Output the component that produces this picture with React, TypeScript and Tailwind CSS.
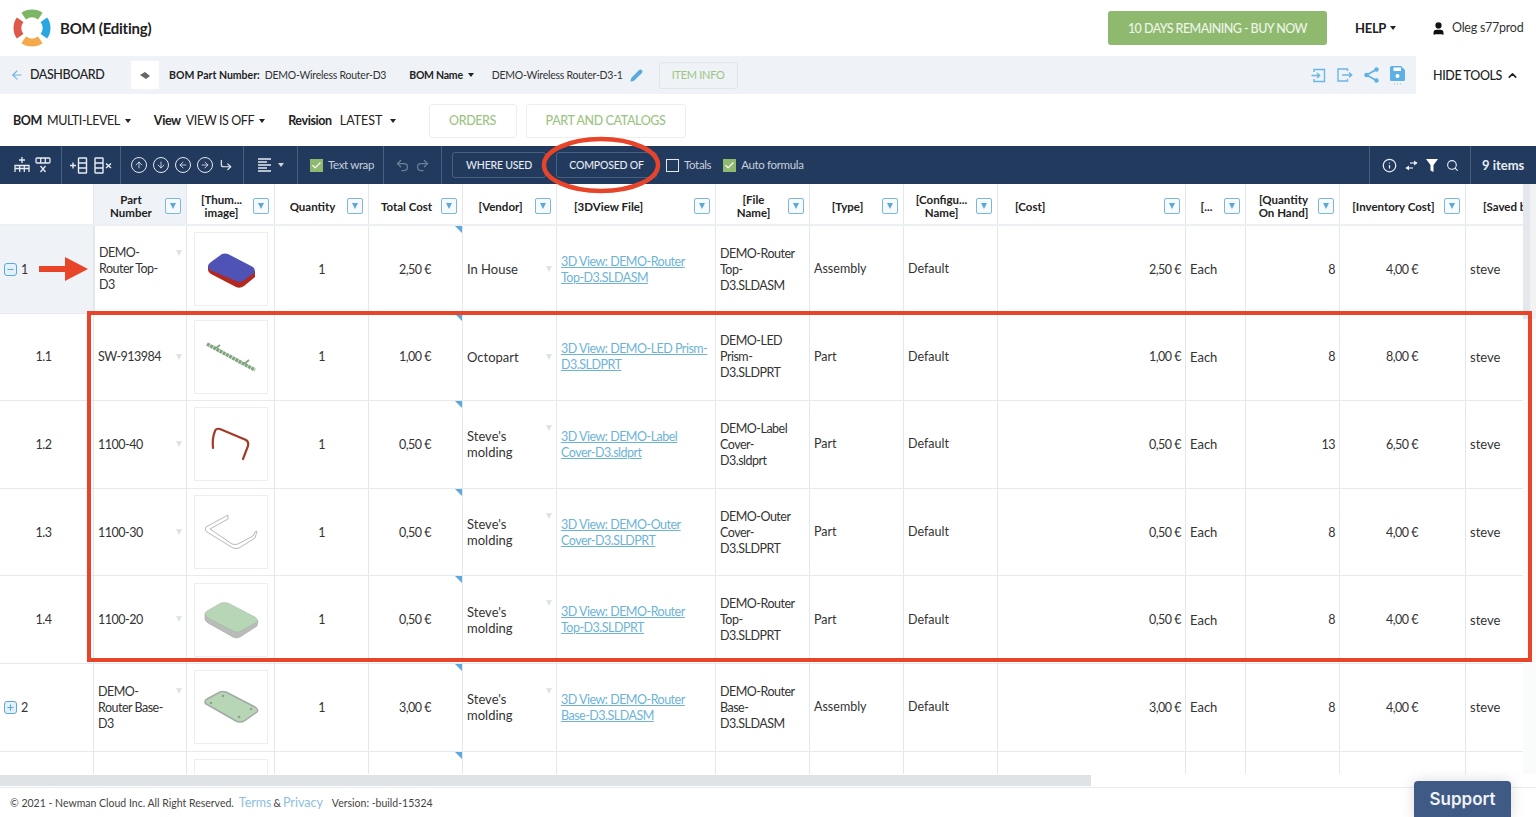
import React from "react";
import { ArrowLeft, Pencil, ChevronUp, User, Search, Info, ArrowUp, ArrowDown, ArrowRight, CornerDownRight, Undo2, Redo2, Check, Plus, Minus } from "lucide-react";

const COLS = "grid-cols-[94px_93px_88px_94px_94px_94px_159px_94px_94px_94px_188px_60px_94px_126px_70px]";
const NUM = "text-[12.5px] tracking-[-0.5px] pt-[1px]";
const CAPS = "text-[12.5px] tracking-[-0.4px]";
const SMALL = "text-[10.5px] tracking-[-0.25px]";

const Caret = () => <span className="inline-block w-0 h-0 border-x-[3.5px] border-x-transparent border-t-[4px] border-t-[#222] align-middle" />;
const WCaret = () => <span className="inline-block w-0 h-0 border-x-[3.5px] border-x-transparent border-t-[4px] border-t-[#cfd6e0]" />;

const Sep = () => <div className="w-px self-stretch bg-[#4a6080]" />;

const Circ = ({ children }: { children: React.ReactNode }) => (
  <span className="w-[16px] h-[16px] rounded-full border border-[#e4e8ee] flex items-center justify-center text-[#e4e8ee]">{children}</span>
);

const Chk = ({ on, label }: { on: boolean; label: string }) => (
  <div className="flex items-center gap-[5px]">
    <span className={on ? "w-[13px] h-[13px] bg-[#8fb96f] flex items-center justify-center" : "w-[13px] h-[13px] border border-[#e4e8ee]"}>
      {on && <Check size={11} strokeWidth={2.5} className="text-white" />}
    </span>
    <span className="text-[11.5px] tracking-[-0.35px] text-[#c6cfdb]">{label}</span>
  </div>
);

const FilterBtn = () => (
  <span className="w-[16px] h-[16px] shrink-0 rounded-[2px] border border-[#7db7dc] bg-[#f6fafd] flex items-center justify-center">
    <span className="w-0 h-0 border-x-[3.5px] border-x-transparent border-t-[6px] border-t-[#5aa9de]" />
  </span>
);

const Logo = () => (
  <svg width="38" height="38" viewBox="0 0 38 38" fill="none" strokeWidth="8">
    <path d="M10.7 7.1 A14.5 14.5 0 0 1 27.3 7.1" stroke="#7cb665" />
    <path d="M30.9 10.7 A14.5 14.5 0 0 1 30.9 27.3" stroke="#2ba7e0" />
    <path d="M27.3 30.9 A14.5 14.5 0 0 1 10.7 30.9" stroke="#f3a94c" />
    <path d="M7.1 27.3 A14.5 14.5 0 0 1 7.1 10.7" stroke="#dd5a4a" />
  </svg>
);

const AddRowIcon = () => (
  <svg width="16" height="16" viewBox="0 0 16 16" fill="none" stroke="#e8ecf2" strokeWidth="1.3">
    <path d="M8 0 V6 M5 3 H11" />
    <path d="M1 15 V8.5 H15 V15 M5.7 8.5 V15 M10.3 8.5 V15 M1 11.5 H15" />
  </svg>
);
const DelRowIcon = () => (
  <svg width="16" height="16" viewBox="0 0 16 16" fill="none" stroke="#e8ecf2" strokeWidth="1.3">
    <rect x="1" y="1" width="14" height="5" rx="1" />
    <path d="M5.7 1 V6 M10.3 1 V6" />
    <path d="M5.5 9 L10.5 15 M10.5 9 L5.5 15" />
  </svg>
);
const AddColIcon = () => (
  <svg width="18" height="17" viewBox="0 0 18 17" fill="none" stroke="#e8ecf2" strokeWidth="1.4">
    <path d="M0 8.5 H6 M3 5.5 V11.5" />
    <rect x="8.5" y="1" width="8" height="15" rx=".5" />
    <path d="M8.5 6 H16.5 M8.5 11 H16.5" />
  </svg>
);
const DelColIcon = () => (
  <svg width="18" height="17" viewBox="0 0 18 17" fill="none" stroke="#e8ecf2" strokeWidth="1.4">
    <rect x="1" y="1" width="8" height="15" rx=".5" />
    <path d="M1 6 H9 M1 11 H9" />
    <path d="M12 6.5 L17 11 M17 6.5 L12 11" />
  </svg>
);
const AlignIcon = () => (
  <svg width="14" height="14" viewBox="0 0 14 14" stroke="#e8ecf2" strokeWidth="1.5">
    <path d="M0 1 H13 M0 4 H9 M0 7 H13 M0 10 H9 M0 13 H13" />
  </svg>
);
const SwapIcon = () => (
  <svg width="13" height="11" viewBox="0 0 13 11" fill="#e8ecf2" stroke="#e8ecf2" strokeWidth="1.2">
    <path d="M5 3 H12" /><path d="M9 0.5 L12.5 3 L9 5.5Z" stroke="none" />
    <path d="M1 8 H8" /><path d="M4 5.5 L0.5 8 L4 10.5Z" stroke="none" />
  </svg>
);
const FunnelIcon = () => (
  <svg width="12" height="13" viewBox="0 0 12 13" fill="#fff"><path d="M0 0 H12 L7.5 6 V13 L4.5 11.5 V6Z" /></svg>
);
const ImportIcon = () => (
  <svg width="15" height="15" viewBox="0 0 15 15" fill="none" stroke="#6db5e3" strokeWidth="1.4">
    <path d="M3 4 V1.5 H13.5 V13.5 H3 V11" /><path d="M0.5 7.5 H8.5 M6 5 L8.7 7.5 L6 10" />
  </svg>
);
const ExportIcon = () => (
  <svg width="16" height="14" viewBox="0 0 16 14" fill="none" stroke="#6db5e3" strokeWidth="1.4">
    <path d="M10.5 3 V1 H1 V13 H10.5 V11" /><path d="M5 7 H14.5 M12 4.5 L14.7 7 L12 9.5" />
  </svg>
);
const ShareIcon = () => (
  <svg width="15" height="16" viewBox="0 0 15 16" fill="#5fb0e4" stroke="#5fb0e4" strokeWidth="1.7">
    <path d="M12.5 2.5 L2.5 8 L12.5 13.5" fill="none" />
    <circle cx="12.5" cy="2.5" r="1.4" /><circle cx="2.5" cy="8" r="1.4" /><circle cx="12.5" cy="13.5" r="1.4" />
  </svg>
);
const SaveIcon = () => (
  <svg width="15" height="19" viewBox="0 0 15 19">
    <path d="M1.5 0 H11 L15 4 V13.5 Q15 15 13.5 15 H1.5 Q0 15 0 13.5 V1.5 Q0 0 1.5 0Z" fill="#5fb0e4" />
    <rect x="3.5" y="1.5" width="7.5" height="3.5" fill="#fff" />
    <circle cx="7.5" cy="10" r="2" fill="#fff" />
    <path d="M4 18 H5 M7 18 H8 M10 18 H11" stroke="#9fb8c9" />
  </svg>
);

const Thumb = ({ children }: { children: React.ReactNode }) => (
  <svg width="72" height="72" viewBox="0 0 72 72">{children}</svg>
);

const thumbs: Record<string, React.ReactNode> = {
  top: (
    <Thumb>
      <path d="M13 33 L13 37 Q13 39 16 41 L41 54 Q45 56 49 53 L60 44 L60 38 L36 34Z" fill="#b4291f" />
      <path d="M13 33 Q13 31 16 29 L27 21 Q30 20 33 21 L58 34 Q61 37 59 40 L48 48 Q45 50 41 48 L15 37 Q13 35 13 33Z" fill="#4f53b5" />
    </Thumb>
  ),
  led: (
    <Thumb>
      <path d="M12 23 L60 49" stroke="#7ea67e" strokeWidth="3.6" fill="none" strokeDasharray="3 .6" />
      <path d="M25 24 L21 27 M54 39 L49 43" stroke="#7ea67e" strokeWidth="1.8" fill="none" />
    </Thumb>
  ),
  label: (
    <Thumb>
      <path d="M18 40 Q17 30 20 23 Q21 20 25 21 L51 32 Q54 34 53 38 L48 51" stroke="#a63a28" strokeWidth="2.2" fill="none" strokeLinecap="round" />
    </Thumb>
  ),
  outer: (
    <Thumb>
      <path d="M33 19 L11 31 Q9 34 12 36 L38 52 Q41 53 44 52 L60 42 L62 35 L60 36 L58 40 L43 48 Q40 49 37 48 L15 33 L33 23Z" stroke="#b9b9b9" strokeWidth="1" fill="#fff" strokeLinejoin="round" />
    </Thumb>
  ),
  green: (
    <Thumb>
      <path d="M10 30 L10 35 Q10 37 13 39 L38 53 Q41 55 45 53 L62 42 L63 37 L35 30Z" fill="#b9bcb9" stroke="#9a9d9a" strokeWidth=".5" />
      <path d="M10 30 Q10 28 12 27 L26 19 Q29 18 33 19 L60 33 Q64 36 62 38 L46 47 Q42 49 38 47 L13 34 Q10 32 10 30Z" fill="#b7d6b6" stroke="#a3b3a3" strokeWidth=".5" />
    </Thumb>
  ),
  base: (
    <Thumb>
      <path d="M10 31 Q10 29 12 28 L25 21 Q28 20 31 21 L60 36 Q64 39 62 41 L49 50 Q45 52 41 50 L13 34 Q10 33 10 31Z" fill="#b7d6b6" stroke="#a4aaa4" strokeWidth="1.5" />
      <circle cx="28" cy="25" r="1.3" fill="#8fa28f" /><circle cx="56" cy="38" r="1.3" fill="#8fa28f" /><circle cx="16" cy="32" r="1.3" fill="#8fa28f" /><circle cx="44" cy="46" r="1.3" fill="#8fa28f" />
    </Thumb>
  ),
};

type Row = { no: string; level: 0 | 1; open?: boolean; part: string; thumb: string; total: string; vendor: string; link: string; file: string; type: string; cost: string; qty: string; inv: string; sel?: boolean };

const rows: Row[] = [
  { no: "1", level: 0, open: true, sel: true, part: "DEMO-\nRouter Top-\nD3", thumb: "top", total: "2,50 €", vendor: "In House", link: "3D View: DEMO-Router\nTop-D3.SLDASM", file: "DEMO-Router\nTop-\nD3.SLDASM", type: "Assembly", cost: "2,50 €", qty: "8", inv: "4,00 €" },
  { no: "1.1", level: 1, part: "SW-913984", thumb: "led", total: "1,00 €", vendor: "Octopart", link: "3D View: DEMO-LED Prism-\nD3.SLDPRT", file: "DEMO-LED\nPrism-\nD3.SLDPRT", type: "Part", cost: "1,00 €", qty: "8", inv: "8,00 €" },
  { no: "1.2", level: 1, part: "1100-40", thumb: "label", total: "0,50 €", vendor: "Steve's molding", link: "3D View: DEMO-Label\nCover-D3.sldprt", file: "DEMO-Label\nCover-\nD3.sldprt", type: "Part", cost: "0,50 €", qty: "13", inv: "6,50 €" },
  { no: "1.3", level: 1, part: "1100-30", thumb: "outer", total: "0,50 €", vendor: "Steve's molding", link: "3D View: DEMO-Outer\nCover-D3.SLDPRT", file: "DEMO-Outer\nCover-\nD3.SLDPRT", type: "Part", cost: "0,50 €", qty: "8", inv: "4,00 €" },
  { no: "1.4", level: 1, part: "1100-20", thumb: "green", total: "0,50 €", vendor: "Steve's molding", link: "3D View: DEMO-Router\nTop-D3.SLDPRT", file: "DEMO-Router\nTop-\nD3.SLDPRT", type: "Part", cost: "0,50 €", qty: "8", inv: "4,00 €" },
  { no: "2", level: 0, open: false, part: "DEMO-\nRouter Base-\nD3", thumb: "base", total: "3,00 €", vendor: "Steve's molding", link: "3D View: DEMO-Router\nBase-D3.SLDASM", file: "DEMO-Router\nBase-\nD3.SLDASM", type: "Assembly", cost: "3,00 €", qty: "8", inv: "4,00 €" },
];

const headers: [string, boolean][] = [
  ["", false], ["Part\nNumber", true], ["[Thum...\nimage]", true], ["Quantity", true], ["Total Cost", true], ["[Vendor]", true], ["[3DView File]", true], ["[File\nName]", true], ["[Type]", true], ["[Configu...\nName]", true], ["[Cost]", true], ["[...", true], ["[Quantity\nOn Hand]", true], ["[Inventory Cost]", true], ["[Saved b", false],
];

const cell = "border-r border-[#e3e8ee] h-full flex items-center px-[4px] min-w-0 relative";
const Corner = () => <span className="absolute top-0 right-0 w-0 h-0 border-l-[7px] border-l-transparent border-t-[7px] border-t-[#5aa9de]" />;
const Fade = ({ top }: { top?: boolean }) => <span className={top ? "absolute right-[4px] top-[24px] w-0 h-0 border-x-[3.5px] border-x-transparent border-t-[6px] border-t-[#dfe3e8]" : "absolute right-[4px] top-[40px] w-0 h-0 border-x-[3.5px] border-x-transparent border-t-[6px] border-t-[#dfe3e8]"} />;

function DataRow({ r }: { r: Row }) {
  return (
    <div className={`grid ${COLS} h-[87.6px] border-b border-[#e6eaef] w-[1536px]`}>
      <div className={`${cell} ${NUM} ${r.sel ? "bg-[#eff3f7]" : ""} ${r.level === 1 ? "justify-center pr-[10px]" : "gap-[4px]"}`}>
        {r.level === 0 && (
          <span className="w-[13px] h-[13px] rounded-[3px] border border-[#5aa9de] bg-[#e4f1fa] flex items-center justify-center">
            {r.open ? <Minus size={9} strokeWidth={3} className="text-[#5aa9de]" /> : <Plus size={9} strokeWidth={3} className="text-[#5aa9de]" />}
          </span>
        )}
        <span>{r.no}</span>
      </div>
      <div className={`${cell} ${NUM} ${r.sel ? "border-x border-b border-[#6fb0d8]" : ""}`}><span className="whitespace-pre-line">{r.part}</span><Fade top={r.part.length > 10} /></div>
      <div className={`${cell} justify-center`}>
        <div className="w-[74px] h-[74px] border border-[#eceef1] flex items-center justify-center">{thumbs[r.thumb]}</div>
      </div>
      <div className={`${cell} ${NUM} justify-center`}>1</div>
      <div className={`${cell} ${NUM} justify-end pr-[31px]`}><Corner />{r.total}</div>
      <div className={cell}><span className="pr-[14px]">{r.vendor}</span><Fade top={r.vendor.length > 9} /></div>
      <div className={`${cell} ${NUM}`}><span className="whitespace-pre-line text-[#6db3d6] underline underline-offset-1">{r.link}</span></div>
      <div className={`${cell} ${NUM}`}><span className="whitespace-pre-line">{r.file}</span></div>
      <div className={`${cell} text-[12.5px]`}>{r.type}</div>
      <div className={`${cell} text-[12.5px]`}>Default</div>
      <div className={`${cell} ${NUM} justify-end`}>{r.cost}</div>
      <div className={cell}>Each</div>
      <div className={`${cell} ${NUM} justify-end`}>{r.qty}</div>
      <div className={`${cell} ${NUM} justify-end pr-[47px]`}>{r.inv}</div>
      <div className="h-full flex items-center px-[4px]">steve</div>
    </div>
  );
}

export default function App() {
  return (
    <div className="relative w-[1536px] h-[817px] overflow-hidden bg-white flex flex-col text-[13px] leading-[16px] text-[#333] font-['Lato','Noto_Sans',sans-serif]">
      {/* top bar */}
      <div className="h-[56px] flex items-center pl-[13px] pr-[11px] shrink-0">
        <Logo />
        <span className="ml-[9px] text-[15px] tracking-[-0.25px] font-bold text-[#222]">BOM (Editing)</span>
        <div className="ml-auto w-[219px] h-[34px] pt-[1px] rounded-[3px] bg-[#8fb96f] flex items-center justify-center text-[12.5px] tracking-[-0.55px] font-medium text-[#eef5e8]">10 DAYS REMAINING - BUY NOW</div>
        <span className="ml-[28px] w-[30px] text-[13px] tracking-[-0.3px] font-bold text-[#222]">HELP</span>
        <span className="ml-[5px] flex"><Caret /></span>
        <User size={15} fill="#111" className="ml-[35px] text-[#111]" />
        <span className="ml-[6px] w-[73px] whitespace-nowrap text-[#333] text-[12.5px] tracking-[-0.25px]">Oleg s77prod</span>
      </div>
      {/* second bar */}
      <div className="h-[38px] flex shrink-0">
        <div className="w-[1416px] bg-[#eff3f7] flex items-center pl-[10px] pr-[11px]">
          <ArrowLeft size={14} className="text-[#6fb3e0]" />
          <span className={`ml-[6px] w-[73px] font-medium whitespace-nowrap text-[#222] ${CAPS}`}>DASHBOARD</span>
          <div className="ml-[28px] w-[28px] h-[28px] bg-white flex items-center justify-center">
            <svg width="12" height="9" viewBox="0 0 12 9"><path d="M1 4 L6 1 L11 5 L7 8 Z" fill="#666" /></svg>
          </div>
          <span className="ml-[10px] font-bold text-[#222] text-[10.5px]">BOM Part Number:</span>
          <span className={`ml-[5px] ${SMALL}`}>DEMO-Wireless Router-D3</span>
          <span className={`ml-[23px] font-bold text-[#222] ${SMALL}`}>BOM Name</span>
          <span className="ml-[5px] flex"><Caret /></span>
          <span className={`ml-[18px] ${SMALL}`}>DEMO-Wireless Router-D3-1</span>
          <Pencil size={13} fill="#5aa9de" className="ml-[7px] text-[#5aa9de]" />
          <div className="ml-[16px] w-[79px] h-[27px] rounded-[3px] border border-[#dfe6ea] flex items-center justify-center text-[11px] tracking-[-0.3px] text-[#9cc583]">ITEM INFO</div>
          <div className="ml-auto flex items-center gap-[11px]">
            <ImportIcon />
            <ExportIcon />
            <ShareIcon />
            <SaveIcon />
          </div>
        </div>
        <div className="flex-1 flex items-center pl-[17px] gap-[4px] pt-[1px]">
          <span className={`font-medium text-[#222] ${CAPS}`}>HIDE TOOLS</span>
          <ChevronUp size={13} strokeWidth={3} className="text-[#222]" />
        </div>
      </div>
      {/* third row */}
      <div className={`h-[52px] pt-[1px] flex items-center pl-[13px] shrink-0 text-[#222] ${CAPS}`}>
        <span className="font-bold">BOM</span><span className="ml-[5px]">MULTI-LEVEL</span><span className="ml-[5px] flex"><Caret /></span>
        <span className="ml-[23px] font-bold">View</span><span className="ml-[5px]">VIEW IS OFF</span><span className="ml-[5px] flex"><Caret /></span>
        <span className="ml-[23px] font-bold">Revision</span><span className="ml-[8px] tracking-normal">LATEST</span><span className="ml-[7px] flex"><Caret /></span>
        <div className="ml-[33px] w-[88px] h-[34px] rounded-[3px] border border-[#eceeef] flex items-center justify-center text-[#9cc583] font-medium">ORDERS</div>
        <div className="ml-[9px] w-[160px] h-[34px] rounded-[3px] border border-[#eceeef] flex items-center justify-center text-[#9cc583] font-medium">PART AND CATALOGS</div>
      </div>
      {/* toolbar */}
      <div className="h-[38px] bg-[#223a5e] flex items-stretch shrink-0 text-[#e8ecf2]">
        <div className="w-[61px] flex items-center justify-center gap-[5px] pl-[3px]"><AddRowIcon /><DelRowIcon /></div>
        <Sep />
        <div className="w-[58px] flex items-center justify-center gap-[6px]"><AddColIcon /><DelColIcon /></div>
        <Sep />
        <div className="w-[122px] flex items-center justify-center gap-[6px]">
          <Circ><ArrowUp size={10} /></Circ><Circ><ArrowDown size={10} /></Circ><Circ><ArrowLeft size={10} /></Circ><Circ><ArrowRight size={10} /></Circ><CornerDownRight size={14} />
        </div>
        <Sep />
        <div className="w-[53px] flex items-center justify-center gap-[6px]"><AlignIcon /><WCaret /></div>
        <Sep />
        <div className="w-[85px] flex items-center pl-[12px]"><Chk on label="Text wrap" /></div>
        <Sep />
        <div className="w-[57px] flex items-center justify-center gap-[5px] text-[#6d7f99]"><Undo2 size={15} /><Redo2 size={15} /></div>
        <Sep />
        <div className="flex items-center pl-[10px] gap-[10px]">
          <div className="w-[94px] h-[26px] rounded-[3px] border border-[#4a6080] flex items-center justify-center text-[10.5px] tracking-[-0.2px] font-medium">WHERE USED</div>
          <div className="w-[101px] h-[26px] rounded-[3px] border border-[#4a6080] flex items-center justify-center text-[10.5px] tracking-[-0.2px] font-medium">COMPOSED OF</div>
        </div>
        <div className="flex items-center ml-[9px] gap-[12px]"><Chk on={false} label="Totals" /><Chk on label="Auto formula" /></div>
        <div className="ml-auto flex">
          <Sep />
          <div className="w-[100px] flex items-center justify-center gap-[8px]"><Info size={15} /><SwapIcon /><FunnelIcon /><Search size={13} /></div>
          <Sep />
          <div className="w-[65px] flex items-center pl-[11px] font-bold text-[13px]">9 items</div>
        </div>
      </div>
      {/* table */}
      <div className={`grid ${COLS} h-[42px] shrink-0 border-b-2 border-[#edf0f3] w-[1536px] text-[11.5px] leading-[13px] font-bold text-[#222]`}>
        {headers.map(([h, f], i) => (
          <div key={i} className={`${i < 14 ? "border-r border-[#e3e8ee]" : ""} ${i === 1 ? "bg-[#eff3f7]" : ""} h-full flex items-center pl-[5px] pr-[5px] pt-[4px] gap-[2px] overflow-hidden`}>
            <span className={`flex-1 min-w-0 whitespace-pre-line ${i === 10 || i === 6 ? "text-left pl-[12px]" : i === 14 ? "whitespace-nowrap text-left pl-[12px]" : "text-center"}`}>{h}</span>
            {f && <FilterBtn />}
          </div>
        ))}
      </div>
      <div className="h-[548px] overflow-hidden shrink-0">
        {rows.map((r) => <DataRow key={r.no} r={r} />)}
        <div className={`grid ${COLS} h-[40px] w-[1536px]`}>
          {Array.from({ length: 15 }).map((_, i) => (
            <div key={i} className={`${i < 14 ? "border-r border-[#e3e8ee]" : ""} relative flex justify-center pt-[7px]`}>
              {i === 2 && <div className="w-[74px] h-[40px] border border-[#eceef1]" />}
              {i === 4 && <Corner />}
            </div>
          ))}
        </div>
      </div>
      {/* h scrollbar */}
      <div className="h-[14px] shrink-0 border-b border-[#e9ecef] pt-[1px]">
        <div className="w-[1091px] h-[11px] bg-[#e0e3e6]" />
      </div>
      {/* footer */}
      <div className="flex-1 flex items-center pl-[10px] text-[10.5px] text-[#444]">
        <span>© 2021 - Newman Cloud Inc. All Right Reserved.</span>
        <span className="ml-[5px] text-[12.5px] text-[#8cc0dc]">Terms</span>
        <span className="mx-[2px]">&amp;</span>
        <span className="text-[12.5px] text-[#8cc0dc]">Privacy</span>
        <span className="ml-[9px]">Version: -build-15324</span>
      </div>
      {/* overlays */}
      <div className="absolute left-[1523px] top-[184px] w-[13px] h-[590px] bg-[#fafbfb]" />
      <div className="absolute left-[1523px] top-[184px] w-[7px] h-[135px] bg-[#e4e7eb]" />
      <div className="absolute left-[1530px] top-[184px] w-[6px] h-[135px] bg-[#f1f2f4]" />
      <div className="absolute left-[1414px] top-[781px] w-[97px] h-[36px] rounded-t-[4px] bg-[#3f5a85] shadow-[0_0_14px_rgba(0,0,0,0.15)] flex items-center justify-center text-[17px] font-semibold text-[#eef1f6] font-['Inter',sans-serif]">Support</div>
      <div className="absolute left-[87px] top-[311px] w-[1445px] h-[351px] border-[4px] border-[#e8442a]" />
      <svg className="absolute left-[38px] top-[256px]" width="52" height="26" viewBox="0 0 52 26"><path d="M1 10 H27 V1 L50 13 L27 25 V16 H1Z" fill="#e8442a" /></svg>
      <svg className="absolute left-[540px] top-[134px]" width="122" height="62" viewBox="0 0 122 62"><ellipse cx="61" cy="31" rx="57" ry="26" fill="none" stroke="#e8442a" strokeWidth="4.5" /></svg>
    </div>
  );
}
